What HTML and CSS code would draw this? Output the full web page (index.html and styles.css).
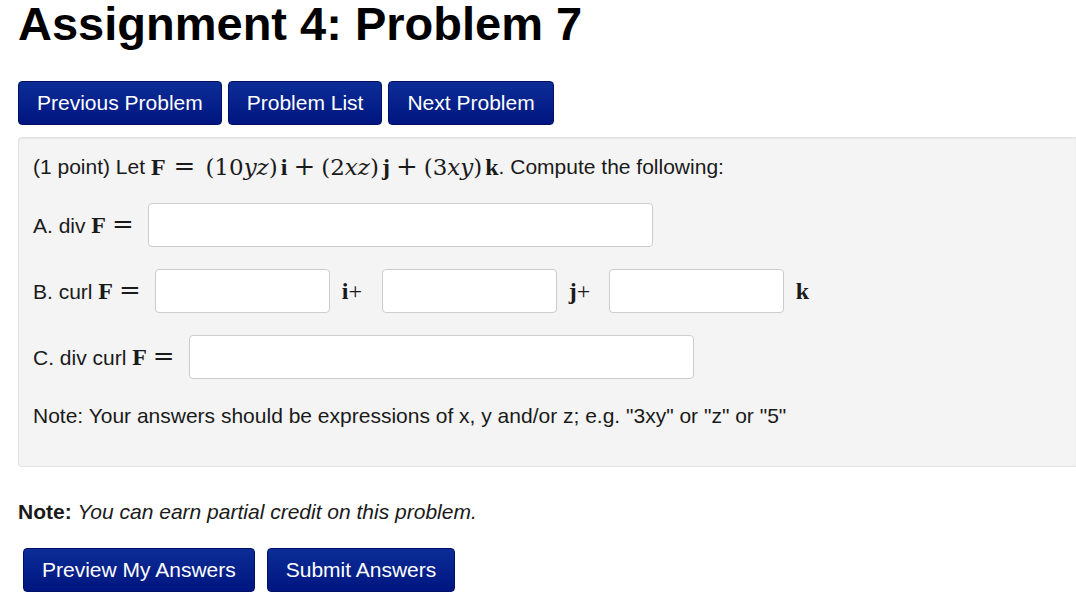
FILE: index.html
```html
<!DOCTYPE html>
<html>
<head>
<meta charset="utf-8">
<title>Assignment 4: Problem 7</title>
<link rel="stylesheet" href="styles.css">
</head>
<body>
<h1 class="title">Assignment 4: Problem 7</h1>
<nav class="nav">
  <button class="btn">Previous Problem</button>
  <button class="btn">Problem List</button>
  <button class="btn">Next Problem</button>
</nav>
<div class="problem">
  <div class="line intro">(1 point) Let <span class="m"><b class="bf">F</b><span class="op eq">=</span><span class="grp">(10<i>yz</i>)</span><b class="bf sp">i</b><span class="op">+</span><span class="grp">(2<i>xz</i>)</span><b class="bf sp">j</b><span class="op">+</span><span class="grp">(3<i>xy</i>)</span><b class="bf sp">k</b></span>. Compute the following:</div>
  <div class="row">
    <span class="lbl">A. div <span class="m"><b class="bf">F</b><span class="op eq">=</span></span></span>
    <span class="inp wide"></span>
  </div>
  <div class="row">
    <span class="lbl">B. curl <span class="m"><b class="bf">F</b><span class="op eq">=</span></span></span>
    <span class="inp short"></span>
    <span class="m unit"><b class="bf">i</b>+</span>
    <span class="inp short"></span>
    <span class="m unit"><b class="bf">j</b>+</span>
    <span class="inp short"></span>
    <span class="m unit"><b class="bf">k</b></span>
  </div>
  <div class="row">
    <span class="lbl">C. div curl <span class="m"><b class="bf">F</b><span class="op eq">=</span></span></span>
    <span class="inp wide"></span>
  </div>
  <div class="line note">Note: Your answers should be expressions of x, y and/or z; e.g. "3xy" or "z" or "5"</div>
</div>
<p class="credit"><b>Note:</b> <i>You can earn partial credit on this problem.</i></p>
<div class="actions">
  <button class="btn">Preview My Answers</button>
  <button class="btn">Submit Answers</button>
</div>
</body>
</html>
```

FILE: styles.css
```css
html, body {
  margin: 0;
  padding: 0;
  background: #fff;
  overflow: hidden;
}
body {
  font-family: "Liberation Sans", Arial, sans-serif;
  font-size: 21px;
  color: #1a1a1a;
  padding-left: 18px;
}
.title {
  margin: 0;
  font-size: 47px;
  line-height: 47px;
  font-weight: bold;
  color: #000;
}
.nav {
  display: flex;
  gap: 6px;
  margin-top: 34px;
}
.btn {
  height: 44px;
  padding: 0 18px;
  border: 1px solid #001066;
  border-radius: 4px;
  background: linear-gradient(#0c2d96, #001580);
  color: #fff;
  font-family: "Liberation Sans", Arial, sans-serif;
  font-size: 21px;
}
.problem {
  margin-top: 12px;
  background: #f4f4f4;
  border: 1px solid #e3e3e3;
  border-right: none;
  border-radius: 4px 0 0 4px;
  box-shadow: inset 0 1px 2px rgba(0,0,0,0.05);
  padding: 14px 0 35px 14px;
}
.line {
  height: 30px;
  display: flex;
  align-items: center;
  white-space: pre;
}
.intro {
  margin-bottom: 21px;
}
.row {
  display: flex;
  align-items: center;
  height: 44px;
  margin-bottom: 22px;
}
.lbl {
  margin-right: 10px;
  white-space: pre;
}
.m {
  font-family: "Liberation Serif", "Times New Roman", serif;
  font-size: 24px;
  white-space: pre;
}
.grp {
  font-family: "DejaVu Serif", serif;
  font-size: 23px;
}
.grp i {
  font-style: italic;
}
.bf {
  font-weight: bold;
}
.sp {
  margin-left: 3px;
}
.op {
  font-family: "DejaVu Serif", serif;
  font-size: 26px;
  line-height: 0;
  margin: 0 6px;
}
.op.eq {
  margin: 0 4px 0 6px;
}
.intro .op.eq {
  margin: 0 10px 0 8px;
}
.inp {
  display: block;
  height: 42px;
  background: #fff;
  border: 1px solid #ccc;
  border-radius: 4px;
}
.wide {
  width: 503px;
}
.short {
  width: 173px;
}
.unit {
  width: 52px;
  padding-left: 12px;
  box-sizing: border-box;
}
.credit {
  margin: 30px 0 0;
  height: 30px;
  line-height: 30px;
}
.actions {
  display: flex;
  gap: 12px;
  margin-top: 21px;
  padding-left: 5px;
}
```
